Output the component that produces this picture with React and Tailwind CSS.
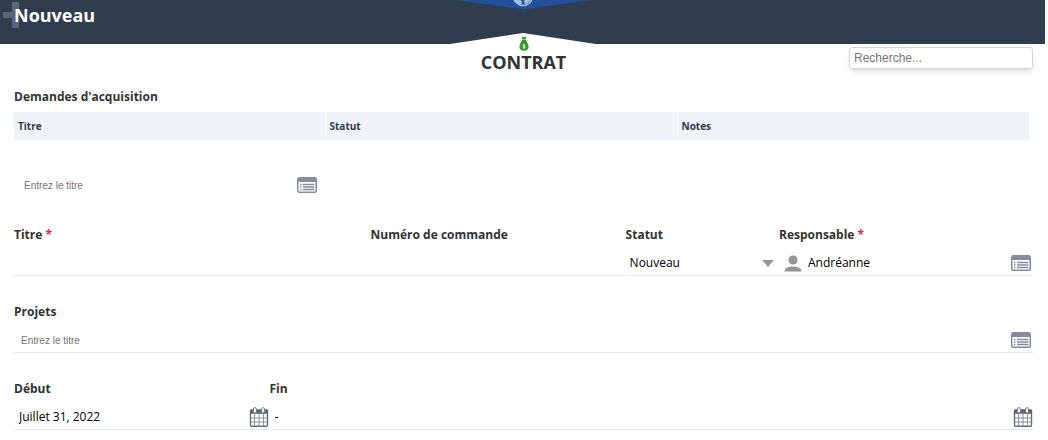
function ListIcon() {
  return (
    <svg viewBox="0 0 20 16" className="h-4 w-5" aria-hidden="true">
      <rect x="0.75" y="0.75" width="18.5" height="14.5" rx="1.5" fill="#fff" stroke="#868da3" strokeWidth="1.5" />
      <path d="M1 1h18v4H1z" fill="#868da3" />
      <path
        d="M3 7.5h1.5M3 10h1.5M3 12.5h1.5M6 7.5h11.5M6 10h11.5M6 12.5h11.5"
        stroke="#868da3"
        strokeWidth="1.3"
      />
    </svg>
  );
}

function CalendarIcon() {
  return (
    <svg viewBox="0 0 20 20" className="size-5" aria-hidden="true">
      <rect x="1.5" y="3" width="17" height="16.2" rx="1" fill="#fff" stroke="#66717f" strokeWidth="1.4" />
      <path d="M1 2.8h18v4H1z" fill="#5c6878" />
      <path d="M5.6 7v12M10 7v12M14.4 7v12M1.5 11h17M1.5 15h17" stroke="#7d8793" strokeWidth="0.9" />
      <rect x="4.4" y="0.6" width="3" height="5.4" rx="1.5" fill="#fff" stroke="#5c6878" strokeWidth="0.8" />
      <rect x="12.6" y="0.6" width="3" height="5.4" rx="1.5" fill="#fff" stroke="#5c6878" strokeWidth="0.8" />
    </svg>
  );
}

function MoneyBagIcon() {
  return (
    <svg viewBox="0 0 10 15" className="h-[15px] w-2.5" aria-hidden="true">
      <path d="M2.6.4 5 1l2.4-.6L6.6 3H3.4z" fill="#3a9a26" />
      <path d="M3.3 3.6h3.4C7.2 5.4 9.6 8 9.6 11c0 2.6-1.8 3.7-4.6 3.7S.4 13.6.4 11c0-3 2.4-5.6 2.9-7.4z" fill="#3a9a26" />
      <path d="M6.3 9.100C5.8 8.500 4 8.500 4 9.500s2.200.7 2.200 1.700-1.700 1-2.300.4M5 8v4.600" fill="none" stroke="#fff" strokeWidth="0.8" />
    </svg>
  );
}

function PersonIcon() {
  return (
    <svg viewBox="0 0 18 17" className="h-[17px] w-[18px] shrink-0" aria-hidden="true">
      <circle cx="9" cy="5" r="4.6" fill="#969696" />
      <path d="M.5 16.5c0-3.4 3.8-4.9 8.5-4.9s8.500 1.500 8.500 4.900z" fill="#969696" />
    </svg>
  );
}

function HeaderCrest() {
  return (
    <svg
      viewBox="0 0 150 45"
      className="pointer-events-none absolute top-0 left-1/2 h-[45px] w-[150px] -translate-x-1/2"
      aria-hidden="true"
    >
      <path d="M8 0h134L75 9.5z" fill="#22509a" />
      <circle cx="75" cy="-4" r="9.5" fill="#22509a" stroke="#a9bddd" strokeWidth="1.6" />
      <path d="M67 0h5.500l1.500 1.500-.5 3.200C70 4.300 67.500 2.500 67 0zM76.500 0H82c-.5 2-2 3.500-4.500 4.200l-1.500-2z" fill="#a9bddd" />
      <path d="M2 45v-1l73-11 73 11v1z" fill="#fff" />
    </svg>
  );
}

function IconButton({ label, children }) {
  return (
    <button type="button" aria-label={label} className="shrink-0">
      {children}
    </button>
  );
}

function Field({ label, id, required, tone = "border-[#e3e8ed]", children }) {
  return (
    <div className="min-w-0">
      <label htmlFor={id} className="block text-xs leading-5 font-bold">
        {label}
        {required && <span className="text-[#dc2850]"> *</span>}
      </label>
      <div className={`mt-1.5 flex h-[25px] items-center border-b ${tone}`}>{children}</div>
    </div>
  );
}

const small = "min-w-0 flex-1 bg-transparent font-['Liberation_Sans',sans-serif] text-[10px] outline-none placeholder:text-[#757575]";
const value = "min-w-0 flex-1 bg-transparent text-xs text-black outline-none";

export default function App() {
  return (
    <div className="bg-white pr-[3px] font-['Open_Sans','Noto_Sans',sans-serif] text-[#333]">
      <header className="relative h-11 bg-[#303d4e]">
        <svg viewBox="0 0 16 26" className="absolute top-0.5 left-[3px] h-[26px] w-4" aria-hidden="true">
          <path d="M0 10h9V0h7v26H9V16H0z" fill="#5c6775" />
        </svg>
        <h1 className="relative px-3.5 pt-[3px] text-lg leading-6 font-bold text-white">Nouveau</h1>
        <HeaderCrest />
      </header>

      <main className="pr-3 pl-3.5">
        <div className="relative -mt-2 grid grid-cols-[1fr_auto_1fr]">
          <h2 className="col-start-2 flex flex-col items-center text-lg leading-[22px] font-bold uppercase">
            <MoneyBagIcon />
            Contrat
          </h2>
          <input
            type="search"
            aria-label="Recherche"
            placeholder="Recherche..."
            className="mt-[11px] h-[22px] w-[184px] justify-self-end rounded-[3px] border border-[#cfd6df] bg-white px-1 font-['Liberation_Sans',sans-serif] text-xs shadow-md outline-none placeholder:text-[#757575]"
          />
        </div>

        <section className="mt-3.5">
          <h3 className="text-xs leading-5 font-bold">Demandes d'acquisition</h3>
          <div className="mt-[5px] pr-1">
            <table className="w-full table-fixed text-left">
              <thead className="text-[10px] text-[#303d4e]">
                <tr className="h-7 bg-[#eff2f6]">
                  <th className="w-[311px] px-1">Titre</th>
                  <th className="w-[352px] border-l border-[#f8fafb] px-1">Statut</th>
                  <th className="border-l border-[#f8fafb] px-1">Notes</th>
                </tr>
              </thead>
              <tbody>
                <tr>
                  <td className="pt-8 pr-2 pl-2.5">
                    <div className="flex h-[26px] items-center">
                      <input aria-label="Titre de la demande" placeholder="Entrez le titre" className={small} />
                      <IconButton label="Choisir une demande">
                        <ListIcon />
                      </IconButton>
                    </div>
                  </td>
                  <td />
                  <td />
                </tr>
              </tbody>
            </table>
          </div>
        </section>

        <form>
          <div className="mt-[27px] grid grid-cols-[35fr_25fr_15fr_25fr] gap-x-px">
            <Field label="Titre" id="titre" required tone="border-[#ebebeb]">
              <input id="titre" className={value} />
            </Field>
            <Field label="Numéro de commande" id="numero" tone="border-[#ebebeb]">
              <input id="numero" className={value} />
            </Field>
            <Field label="Statut" id="statut" tone="border-[#ebebeb]">
              <select id="statut" className={`${value} appearance-none pl-1`}>
                <option>Nouveau</option>
              </select>
              <svg viewBox="0 0 12 7" className="mr-1 h-[7px] w-3 shrink-0" aria-hidden="true">
                <path d="M0 0h12L6 7z" fill="#969696" />
              </svg>
            </Field>
            <Field label="Responsable" id="responsable" required>
              <div className="flex min-w-0 flex-1 items-center gap-1.5 pr-0.5 pl-[5px]">
                <PersonIcon />
                <input id="responsable" defaultValue="Andréanne" className={value} />
                <IconButton label="Choisir un responsable">
                  <ListIcon />
                </IconButton>
              </div>
            </Field>
          </div>

          <div className="mt-[26px]">
            <Field label="Projets" id="projets">
              <div className="flex min-w-0 flex-1 items-center pr-0.5 pl-[7px]">
                <input id="projets" placeholder="Entrez le titre" className={small} />
                <IconButton label="Choisir un projet">
                  <ListIcon />
                </IconButton>
              </div>
            </Field>
          </div>

          <div className="mt-[26px] grid grid-cols-[1fr_3fr] gap-x-px">
            <Field label="Début" id="debut">
              <input id="debut" defaultValue="Juillet 31, 2022" className={`${value} pl-[5px]`} />
              <IconButton label="Choisir la date de début">
                <CalendarIcon />
              </IconButton>
            </Field>
            <Field label="Fin" id="fin">
              <input id="fin" defaultValue="-" className={`${value} pl-[5px]`} />
              <IconButton label="Choisir la date de fin">
                <CalendarIcon />
              </IconButton>
            </Field>
          </div>
        </form>
      </main>
    </div>
  );
}
